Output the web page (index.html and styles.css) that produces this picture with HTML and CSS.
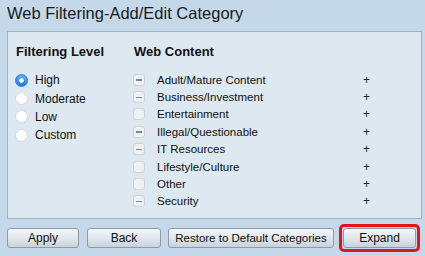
FILE: index.html
```html
<!DOCTYPE html>
<html>
<head>
<meta charset="utf-8">
<link rel="stylesheet" href="styles.css">
</head>
<body>
<h1 class="title">Web Filtering-Add/Edit Category</h1>
<div class="panel">
  <div class="col-left">
    <div class="heading">Filtering Level</div>
    <ul class="radios">
      <li><span class="radio checked"></span>High</li>
      <li><span class="radio"></span>Moderate</li>
      <li><span class="radio"></span>Low</li>
      <li><span class="radio"></span>Custom</li>
    </ul>
  </div>
  <div class="col-right">
    <div class="heading">Web Content</div>
    <ul class="cats">
      <li><span class="cb minus"></span><span class="lbl">Adult/Mature Content</span><span class="plus">+</span></li>
      <li><span class="cb minus"></span><span class="lbl">Business/Investment</span><span class="plus">+</span></li>
      <li><span class="cb"></span><span class="lbl">Entertainment</span><span class="plus">+</span></li>
      <li><span class="cb minus"></span><span class="lbl">Illegal/Questionable</span><span class="plus">+</span></li>
      <li><span class="cb minus"></span><span class="lbl">IT Resources</span><span class="plus">+</span></li>
      <li><span class="cb"></span><span class="lbl">Lifestyle/Culture</span><span class="plus">+</span></li>
      <li><span class="cb"></span><span class="lbl">Other</span><span class="plus">+</span></li>
      <li><span class="cb minus"></span><span class="lbl">Security</span><span class="plus">+</span></li>
    </ul>
  </div>
</div>
<div class="buttons">
  <button class="btn btn-apply">Apply</button>
  <button class="btn btn-back">Back</button>
  <button class="btn btn-restore">Restore to Default Categories</button>
  <span class="highlight"><button class="btn btn-expand">Expand</button></span>
</div>
</body>
</html>
```

FILE: styles.css
```css
* { box-sizing: border-box; }
html, body {
  margin: 0;
  padding: 0;
}
body {
  width: 425px;
  height: 256px;
  overflow: hidden;
  background: #c4d8ea;
  font-family: "Liberation Sans", Arial, Helvetica, sans-serif;
  color: #111;
}
.title {
  margin: 0;
  height: 31px;
  padding: 3px 0 0 7px;
  font-size: 16.5px;
  font-weight: normal;
  line-height: 20px;
  color: #1a1a1a;
}
.panel {
  margin: 0 3px 0 7px;
  height: 188px;
  border: 1px solid #9fb2c3;
  background: #dde8f0;
  display: grid;
  grid-template-columns: 117px 1fr;
  padding: 12px 0 0 8px;
}
.heading {
  font-size: 13px;
  font-weight: bold;
  line-height: 15px;
  height: 15px;
  color: #111;
}
.radios, .cats {
  list-style: none;
  margin: 0;
  padding: 0;
}
.radios {
  margin-top: 12px;
}
.radios li {
  display: flex;
  align-items: center;
  height: 18.4px;
  font-size: 12px;
}
.radio {
  width: 13px;
  height: 13px;
  border-radius: 50%;
  background: #fff;
  border: 1px solid #d2d8de;
  margin: 0 7px 0 -1px;
  flex: none;
}
.radio.checked {
  border: 1px solid #2b7fd8;
  background: radial-gradient(circle, #fff 0 2px, transparent 2.5px), linear-gradient(#5cb0f5, #1e77e0);
}
.col-right .heading {
  margin-left: 1px;
}
.cats {
  margin-top: 12px;
}
.cats li {
  display: flex;
  align-items: center;
  height: 17.4px;
  font-size: 11.5px;
}
.cb {
  width: 12px;
  height: 12px;
  border-radius: 3px;
  background: #edf1f4;
  border: 1px solid #ccd4db;
  position: relative;
  flex: none;
}
.cb.minus::after {
  content: "";
  position: absolute;
  left: 2px;
  right: 2px;
  top: 4.5px;
  height: 1.5px;
  background: #7f8891;
}
.lbl {
  margin-left: 12px;
  width: 206px;
}
.plus {
  font-size: 12px;
  color: #222;
}
.buttons {
  display: flex;
  align-items: center;
  padding: 5px 0 0 7px;
  gap: 8px;
}
.btn {
  height: 20px;
  border: 1px solid #8d9cab;
  border-radius: 3px;
  background: linear-gradient(#f4f7f9, #dce3e9 60%, #c8d1da);
  font-family: "Liberation Sans", Arial, Helvetica, sans-serif;
  font-size: 12px;
  color: #111;
  padding: 0;
  line-height: 18px;
  white-space: nowrap;
}
.btn-apply { width: 72px; }
.btn-back { width: 74px; }
.btn-restore { width: 166px; margin-left: -1px; font-size: 11.5px; }
.highlight {
  display: inline-block;
  margin-left: -3px;
  padding: 1px;
  border: 3px solid #e0141b;
  border-radius: 5px;
}
.btn-expand { width: 73px; display: block; }
```
